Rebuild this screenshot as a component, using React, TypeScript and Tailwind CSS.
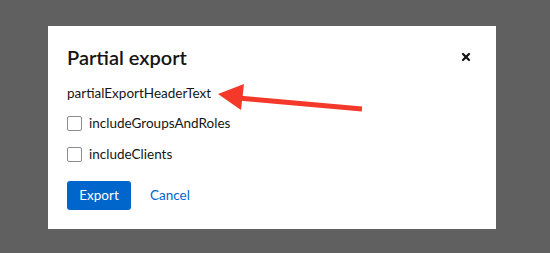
import { X } from "lucide-react";

function Check({ label }: { label: string }) {
  return (
    <label className="flex items-center gap-[7px] h-[16px]">
      <span className="w-[15px] h-[15px] border border-[#8a8d90] rounded-[2px] bg-white" />
      <span className="text-[13.5px] text-[#151515]">{label}</span>
    </label>
  );
}

export default function App() {
  return (
    <div
      className="relative w-[550px] h-[253px] bg-[#606060] overflow-hidden"
      style={{ fontFamily: 'Lato, "Liberation Sans", sans-serif' }}
    >
      <div className="absolute left-[48px] top-[26px] w-[448px] h-[203px] bg-white px-[19px] pt-[18px]">
        <div className="flex items-center justify-between h-[26px]">
          <h1 className="text-[20px] font-semibold text-[#151515]">Partial export</h1>
          <X className="w-[12px] h-[12px] mr-[5px] text-[#151515]" strokeWidth={4.5} />
        </div>
        <p className="mt-[13px] text-[13.5px] leading-[20px] text-[#151515]">partialExportHeaderText</p>
        <div className="mt-[12px] flex flex-col gap-[15px]">
          <Check label="includeGroupsAndRoles" />
          <Check label="includeClients" />
        </div>
        <div className="mt-[19px] flex items-center gap-[19px]">
          <button className="w-[64px] h-[29px] rounded-[3px] bg-[#0066cc] text-white text-[13.5px]">Export</button>
          <button className="text-[13.5px] text-[#0066cc]">Cancel</button>
        </div>
      </div>
      <svg className="absolute left-0 top-0" width="550" height="253">
        <line x1="238" y1="98" x2="362" y2="109" stroke="#f4382a" strokeWidth="5" />
        <polygon points="218,94 244,84 241,110" fill="#f4382a" />
      </svg>
    </div>
  );
}
